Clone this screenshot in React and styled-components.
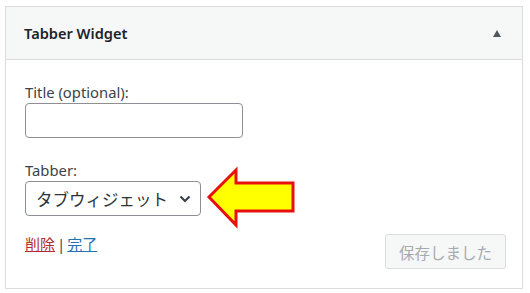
import React from "react";
import styled, { createGlobalStyle } from "styled-components";

const GlobalStyle = createGlobalStyle`
  html, body {
    margin: 0;
    padding: 0;
    background: #ffffff;
  }
  body {
    font-family: "Noto Sans", "Noto Sans CJK JP", sans-serif;
    color: #3c434a;
  }
`;

const Page = styled.div`
  width: 530px;
  height: 293px;
  box-sizing: border-box;
  padding: 6px 7px 0 5px;
`;

const Widget = styled.div`
  border: 1px solid #dcdcde;
  background: #fff;
`;

const Header = styled.div`
  height: 52px;
  display: flex;
  align-items: center;
  justify-content: space-between;
  padding: 0 21px 0 18px;
  background: #f6f7f7;
  border-bottom: 1px solid #dcdcde;
`;

const HeaderTitle = styled.h3`
  margin: 0;
  font-size: 14.6px;
  font-weight: 600;
  color: #1d2327;
`;

const Toggle = styled.span`
  width: 0;
  height: 0;
  border-left: 4.5px solid transparent;
  border-right: 4.5px solid transparent;
  border-bottom: 7px solid #50575e;
`;

const Body = styled.div`
  padding: 22px 16px 19px 19px;
  display: flex;
  flex-direction: column;
`;

const Label = styled.label`
  display: block;
  font-size: 14.8px;
  line-height: 20px;
  color: #3c434a;
  margin-top: ${(p) => (p.$first ? "0" : "22px")};
  margin-bottom: ${(p) => p.$gap || "0"};
`;

const TextInput = styled.input`
  width: 218px;
  height: 35px;
  box-sizing: border-box;
  border: 1px solid #8c8f94;
  border-radius: 4px;
  background: #fff;
  padding: 0 8px;
  font-size: 14px;
`;

const SelectRow = styled.div`
  display: flex;
  align-items: center;
  gap: 4px;
`;

const SelectBox = styled.div`
  width: 176px;
  height: 35px;
  box-sizing: border-box;
  border: 1px solid #8c8f94;
  border-radius: 4px;
  display: flex;
  align-items: center;
  justify-content: space-between;
  padding: 0 9px 0 10px;
  font-size: 16.5px;
  color: #2c3338;
  background: #fff;
`;

const Arrow = styled.svg`
  margin: -14px 0 -12px;
  flex: none;
`;

const Actions = styled.div`
  margin-top: 17px;
  display: flex;
  justify-content: space-between;
  align-items: flex-start;
`;

const Links = styled.div`
  font-size: 15px;
  line-height: 20px;
  color: #3c434a;
`;

const ActionLink = styled.a`
  color: ${(p) => (p.$danger ? "#b32d2e" : "#2271b1")};
  text-decoration: underline;
  cursor: pointer;
`;

const Sep = styled.span`
  margin: 0 2px;
`;

const SaveButton = styled.button`
  width: 121px;
  height: 35px;
  box-sizing: border-box;
  border: 1px solid #dcdcde;
  border-radius: 3px;
  background: #f6f7f7;
  color: #a7aaad;
  font-family: "Noto Sans CJK JP", sans-serif;
  font-size: 15.5px;
  padding: 0;
`;

export default function App() {
  return (
    <>
      <GlobalStyle />
      <Page>
        <Widget>
          <Header>
            <HeaderTitle>Tabber Widget</HeaderTitle>
            <Toggle />
          </Header>
          <Body>
            <Label $first $gap="1px">Title (optional):</Label>
            <TextInput type="text" />
            <Label>Tabber:</Label>
            <SelectRow>
              <SelectBox>
                <span>タブウィジェット</span>
                <svg width="12" height="8" viewBox="0 0 12 8">
                  <path d="M1.5 1.5 L6 6 L10.5 1.5" fill="none" stroke="#3c434a" strokeWidth="2.2" />
                </svg>
              </SelectBox>
              <Arrow width="92" height="63" viewBox="0 0 92 63">
                <path
                  d="M4 31 L31 4 L31 17 L88 17 L88 45 L31 45 L31 59 Z"
                  fill="#ffff00"
                  stroke="#e8100c"
                  strokeWidth="3"
                  strokeLinejoin="miter"
                />
              </Arrow>
            </SelectRow>
            <Actions>
              <Links>
                <ActionLink $danger>削除</ActionLink>
                <Sep>|</Sep>
                <ActionLink>完了</ActionLink>
              </Links>
              <SaveButton disabled>保存しました</SaveButton>
            </Actions>
          </Body>
        </Widget>
      </Page>
    </>
  );
}
